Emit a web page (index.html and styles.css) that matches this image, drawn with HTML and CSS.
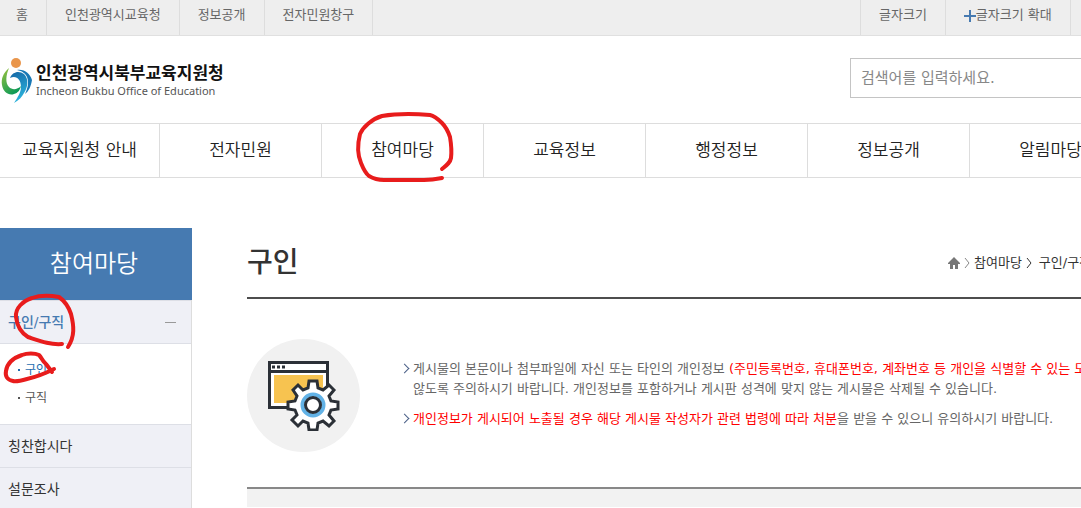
FILE: index.html
```html
<!DOCTYPE html>
<html lang="ko">
<head>
    <meta charset="UTF-8">
    <meta name="viewport" content="width=device-width, initial-scale=1.0">
    <title>구인 - 인천광역시북부교육지원청</title>
    <link rel="stylesheet" href="styles.css">
</head>
<body>
    <div class="page">
        <div class="topbar">
            <ul class="top-links">
                <li><a href="#">홈</a></li>
                <li><a href="#">인천광역시교육청</a></li>
                <li><a href="#">정보공개</a></li>
                <li><a href="#">전자민원창구</a></li>
            </ul>
            <ul class="top-tools">
                <li><span>글자크기</span></li>
                <li>
                    <button type="button">
                        <svg class="plus" width="12" height="12" viewBox="0 0 12 12"><path d="M6 0v12M0 6h12" stroke="#467ab1" stroke-width="2"/></svg>글자크기 확대
                    </button>
                </li>
            </ul>
        </div>

        <div class="header">
            <a class="logo" href="#">
                <svg width="32" height="46" viewBox="0 0 32 46">
                    <defs>
                        <linearGradient id="green" x1="0" y1="0" x2="0.6" y2="1">
                            <stop offset="0" stop-color="#9cc23c"/>
                            <stop offset="1" stop-color="#0c9a58"/>
                        </linearGradient>
                        <linearGradient id="blue" x1="0" y1="0" x2="0.3" y2="1">
                            <stop offset="0" stop-color="#1565a5"/>
                            <stop offset="1" stop-color="#2bb3dc"/>
                        </linearGradient>
                    </defs>
                    <circle cx="16" cy="5" r="5" fill="#e9964c"/>
                    <path d="M9 10C3 15 1 21 2 27c1 7 7 11 12 9 4-1 6-4 7-8-4 4-9 4-12 1-4-4-3-12 0-19z" fill="url(#green)"/>
                    <path d="M10 20c2-6 9-8 14-4 5 5 4 13 0 19-2 4-5 7-10 10 4-6 7-11 7-16 0-8-5-12-11-9z" fill="url(#blue)"/>
                    <path d="M17 12c8-1 13 4 15 10-1 6-3 11-7 14 3-6 4-12 2-17-2-4-5-6-10-7z" fill="#1878b5"/>
                </svg>
                <span class="logo-text">
                    <strong>인천광역시북부교육지원청</strong>
                    <em>Incheon Bukbu Office of Education</em>
                </span>
            </a>
            <form class="search">
                <input type="text" placeholder="검색어를 입력하세요." aria-label="검색어">
            </form>
        </div>

        <ul class="gnb">
            <li><a href="#">교육지원청 안내</a></li>
            <li><a href="#">전자민원</a></li>
            <li><a href="#">참여마당</a></li>
            <li><a href="#">교육정보</a></li>
            <li><a href="#">행정정보</a></li>
            <li><a href="#">정보공개</a></li>
            <li><a href="#">알림마당</a></li>
        </ul>

        <div class="container">
            <div class="side">
                <h2>참여마당</h2>
                <ul class="side-menu">
                    <li class="active">
                        <a href="#">구인/구직</a>
                        <ul class="sub-menu">
                            <li class="on"><a href="#">구인</a></li>
                            <li><a href="#">구직</a></li>
                        </ul>
                    </li>
                    <li><a href="#">칭찬합시다</a></li>
                    <li><a href="#">설문조사</a></li>
                </ul>
            </div>

            <div class="content">
                <div class="title-row">
                    <h1>구인</h1>
                    <div class="breadcrumb">
                        <svg width="12" height="12" viewBox="0 0 12 12"><path d="M6 0l6 6v1h-2v5H7V8H5v4H2V7H0V6z" fill="#777"/></svg>
                        <svg width="6" height="10" viewBox="0 0 6 10"><path d="M1 0l4 5-4 5" fill="none" stroke="#888"/></svg>
                        <a href="#">참여마당</a>
                        <svg width="6" height="10" viewBox="0 0 6 10"><path d="M1 0l4 5-4 5" fill="none" stroke="#333"/></svg>
                        <a href="#">구인/구직</a>
                    </div>
                </div>

                <div class="notice">
                    <div class="notice-icon">
                        <svg width="72" height="70" viewBox="0 0 72 70">
                            <rect x="1.5" y="1.5" width="58" height="45" fill="#fff" stroke="#2b3037" stroke-width="3"/>
                            <path d="M1 10.500h59" stroke="#2b3037" stroke-width="3"/>
                            <path d="M4 6h3M9 6h3M14 6h3" stroke="#2b3037" stroke-width="3"/>
                            <rect x="6" y="14" width="49" height="28" fill="#f7c350"/>
                            <g transform="translate(45 44)">
                                <path fill="#fff" stroke="#2b3037" stroke-width="3" d="M-4-24H4L5-17 10-15 16-20 21-15 16-9 18-4 25-3V4L18 5 16 10 21 16 16 21 10 16 5 18 4 25H-4L-5 18-10 16-15 21-21 15-16 10-18 5-25 4V-3L-18-4-16-9-20-15-15-20-10-15-5-17z"/>
                                <circle r="10.500" fill="#fff" stroke="#62b2e6" stroke-width="4"/>
                                <circle r="7.500" fill="#fff" stroke="#2b3037" stroke-width="3"/>
                            </g>
                        </svg>
                    </div>
                    <ul class="notice-list">
                        <li>게시물의 본문이나 첨부파일에 자신 또는 타인의 개인정보 <strong>(주민등록번호, 휴대폰번호, 계좌번호 등 개인을 식별할 수 있는 모든</strong><br>않도록 주의하시기 바랍니다. 개인정보를 포함하거나 게시판 성격에 맞지 않는 게시물은 삭제될 수 있습니다.</li>
                        <li><strong>개인정보가 게시되어 노출될 경우 해당 게시물 작성자가 관련 법령에 따라 처분</strong>을 받을 수 있으니 유의하시기 바랍니다.</li>
                    </ul>
                </div>

                <div class="board"></div>
            </div>
        </div>

        <!-- red pen marks -->
        <svg class="marks" width="460" height="390" viewBox="0 0 460 390">
            <path d="M442 169C447 165 450 163 451 158C452 150 451 143 450 137C448 131 446 127 442 123C438 119 435 116 430 115C418 114 400 113 382 116C372 119 363 127 360 134C357 146 358 156 361 163C363 168 365 173 369 176C374 179 378 180 384 180H424C432 180 437 179 442 178"/>
            <path d="M62 344C50 345 40 341 28 337C20 332 17 326 16 317C15 308 23 301 32 298C40 295 49 295 59 297C66 302 69 308 71 314C74 326 75 336 68 347"/>
            <path d="M54 369C44 374 36 377 27 379C20 381 16 382 13 381C7 380 5 376 6 371C7 364 13 358 22 355C27 353 35 353 39 355C42 358 42 361 46 364L52 372"/>
        </svg>
    </div>
</body>
</html>
```
FILE: styles.css
```css
* {
    box-sizing: border-box;
}
body {
    margin: 0;
    overflow: hidden;
    background: #fff;
    color: #333;
    font-family: "DejaVu Sans", "Noto Sans CJK KR", sans-serif;
    font-size: 13px;
    line-height: 20px;
}
ul {
    list-style: none;
    margin: 0;
    padding: 0;
}
h1, h2 {
    margin: 0;
}
a {
    color: inherit;
    text-decoration: none;
}
svg {
    flex: none;
}
.page {
    position: relative;
    min-width: 1132px;
}

/* top bar */
.topbar {
    display: flex;
    justify-content: space-between;
    height: 36px;
    background: #eee;
    border-bottom: 1px solid #e0e0e0;
    color: #666;
}
.top-links,
.top-tools {
    display: flex;
}
.top-links li {
    padding: 5px 18px 0;
    border-right: 1px solid #ddd;
}
.top-links li:first-child {
    padding-left: 16px;
}
.top-tools {
    width: 272px;
}
.top-tools li {
    padding: 5px 18px 0;
    border-left: 1px solid #ddd;
}
.top-tools li:last-child {
    border-right: 1px solid #ddd;
}
.top-tools button {
    display: flex;
    padding: 0;
    border: 0;
    background: none;
    color: inherit;
    font: inherit;
    white-space: nowrap;
}
.plus {
    margin-top: 5px;
}

/* header */
.header {
    display: flex;
    justify-content: space-between;
    padding: 22px 0 19px;
}
.logo {
    display: flex;
    gap: 4px;
}
.logo-text {
    display: flex;
    flex-direction: column;
    padding-top: 5px;
}
.logo strong {
    color: #111;
    font-size: 17px;
    line-height: 20px;
}
.logo em {
    color: #555;
    font-family: "Noto Sans", sans-serif;
    font-size: 11px;
    font-style: normal;
    line-height: 16px;
}
.search {
    width: 282px;
}
.search input {
    width: 100%;
    height: 40px;
    padding: 0 10px;
    border: 1px solid #c4c4c4;
    font-family: inherit;
    font-size: 15px;
}
.search input::placeholder {
    color: #888;
}

/* main menu */
.gnb {
    display: flex;
    border-top: 1px solid #ddd;
    border-bottom: 1px solid #ddd;
}
.gnb li {
    flex: 0 0 162px;
    border-right: 1px solid #ddd;
    font-size: 17px;
    font-weight: 350;
    line-height: 53px;
    text-align: center;
}
.gnb li:first-child {
    flex-basis: 160px;
}
.gnb a {
    display: block;
    color: #222;
}

/* side menu */
.container {
    display: flex;
    gap: 55px;
    padding-top: 50px;
}
.side {
    flex: 0 0 192px;
}
.side h2 {
    background: #467ab1;
    color: #fff;
    font-size: 24px;
    font-weight: 350;
    line-height: 72px;
    text-align: center;
    padding-right: 4px;
}
.side-menu {
    border-right: 1px solid #ddd;
}
.side-menu > li > a {
    display: block;
    padding: 0 8px;
    border-top: 1px solid #dddfe6;
    background: #eff0f6;
    font-size: 14px;
    line-height: 42px;
}
.side-menu > .active > a {
    display: flex;
    justify-content: space-between;
    align-items: center;
    padding-right: 15px;
    color: #467ab1;
    font-weight: 500;
}
.active > a::after {
    content: "";
    width: 11px;
    height: 1px;
    background: #999;
}
.sub-menu {
    padding: 12px 18px;
    border-top: 1px solid #dddfe6;
    color: #555;
    font-size: 12px;
    line-height: 28px;
}
.sub-menu a {
    display: flex;
    align-items: center;
    gap: 5px;
}
.sub-menu a::before {
    content: "";
    width: 2px;
    height: 2px;
    background: currentColor;
}
.sub-menu .on {
    color: #1d6cb0;
}

/* content */
.content {
    flex: 1;
}
.title-row {
    display: flex;
    justify-content: space-between;
    align-items: center;
    height: 71px;
    border-bottom: 2px solid #4d4d4d;
}
h1 {
    font-size: 28px;
    font-weight: 500;
    line-height: 40px;
}
.breadcrumb {
    display: flex;
    align-items: center;
    gap: 4px;
    width: 184px;
    white-space: nowrap;
}
.breadcrumb a:last-child {
    padding-left: 3px;
}
.notice {
    display: flex;
    gap: 41px;
    padding: 40px 0 35px;
}
.notice-icon {
    display: flex;
    flex: 0 0 113px;
    align-items: center;
    justify-content: center;
    height: 113px;
    border-radius: 50%;
    background: #f1f1f1;
}
.notice-list {
    padding-top: 20px;
    color: #666;
    white-space: nowrap;
}
.notice-list li {
    position: relative;
    margin-bottom: 10px;
    padding-left: 12px;
}
.notice-list li:last-child {
    margin-bottom: 0;
}
.notice-list li::before {
    content: "";
    position: absolute;
    left: 0;
    top: 6px;
    width: 6px;
    height: 6px;
    border-top: 1px solid #4a5f86;
    border-right: 1px solid #4a5f86;
    transform: rotate(45deg);
}
.notice-list strong {
    color: #f00;
    font-weight: 400;
}
.board {
    height: 20px;
    border-top: 2px solid #888;
    background: #f2f2f2;
}

.marks {
    position: absolute;
    left: 0;
    top: 0;
    fill: none;
    stroke: #e81c1c;
    stroke-width: 4;
    stroke-linecap: round;
    stroke-linejoin: round;
    pointer-events: none;
}
```
